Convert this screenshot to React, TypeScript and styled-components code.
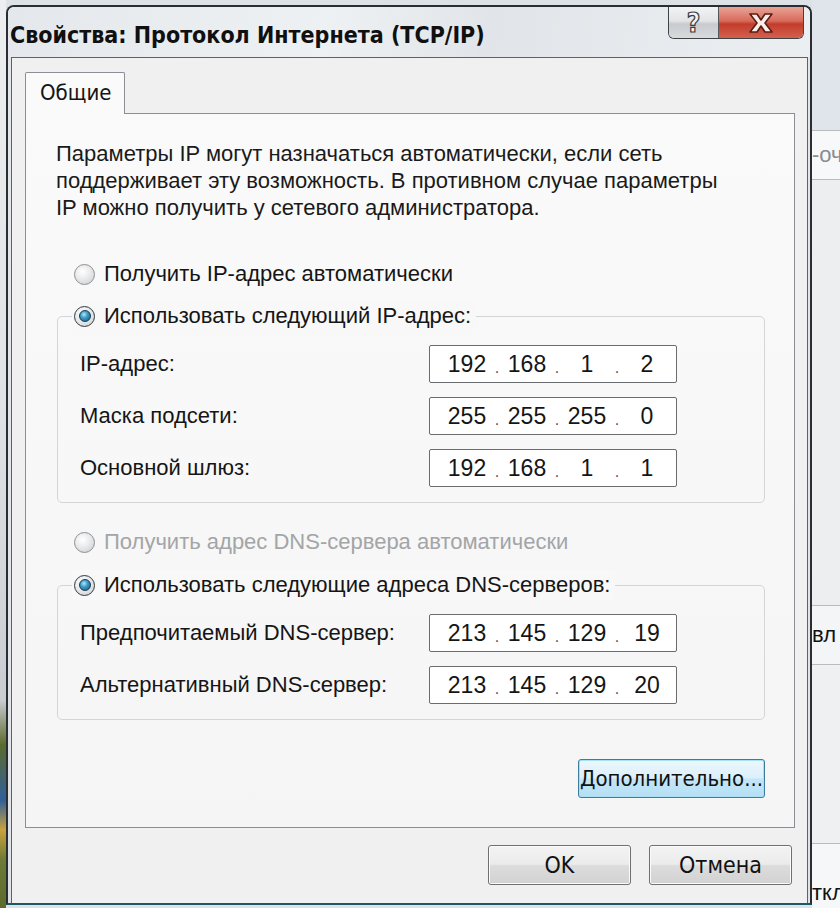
import React from 'react'
import styled, { createGlobalStyle } from 'styled-components'

const GlobalStyle = createGlobalStyle`
  html, body {
    margin: 0;
    padding: 0;
    background: #dde2e7;
  }
  body {
    font-family: "Liberation Sans", Arial, sans-serif;
    color: #151515;
  }
  * { box-sizing: border-box; }
`

const narrow = `"Liberation Sans Narrow", "DejaVu Sans Condensed", "Liberation Sans", sans-serif`

interface IpFieldProps {
  label: string;
  value: string[];
}

const IpRow: React.FC<IpFieldProps> = ({ label, value }) => (
  <>
    <FieldLabel>{label}</FieldLabel>
    <IpBox>
      {value.map((part, i) => (
        <React.Fragment key={i}>
          {i > 0 && <IpDot>.</IpDot>}
          <IpPart>{part}</IpPart>
        </React.Fragment>
      ))}
    </IpBox>
  </>
)

interface RadioProps {
  label: string;
  checked?: boolean;
  disabled?: boolean;
}

const Radio: React.FC<RadioProps> = ({ label, checked, disabled }) => (
  <>
    <RadioCircle $checked={checked}>{checked && <RadioDot />}</RadioCircle>
    <RadioText $disabled={disabled}>{label}</RadioText>
  </>
)

const CloseGlyph = () => (
  <svg width="30" height="22" viewBox="0 0 30 22">
    <path
      d="M4 2 H11 L15 8 L19 2 H26 L19 11 L26 20 H19 L15 14 L11 20 H4 L11 11 Z"
      fill="#fbeeea"
      stroke="#5a1d14"
      strokeWidth="1.6"
      strokeLinejoin="round"
    />
  </svg>
)

export default function App() {
  return (
    <Page>
      <GlobalStyle />
      <LeftStrip />
      <Window>
        <TitleBar>
          <Title>Свойства: Протокол Интернета (TCP/IP)</Title>
          <CaptionButtons>
            <HelpButton>?</HelpButton>
            <CloseButton><CloseGlyph /></CloseButton>
          </CaptionButtons>
        </TitleBar>
        <Client>
          <TabStrip>
            <Tab>Общие</Tab>
          </TabStrip>
          <Panel>
            <Description>
              Параметры IP могут назначаться автоматически, если сеть<br />
              поддерживает эту возможность. В противном случае параметры<br />
              IP можно получить у сетевого администратора.
            </Description>

            <RadioRow $top={38}>
              <Radio label="Получить IP-адрес автоматически" />
            </RadioRow>

            <GroupBox $top={27}>
              <GroupLegend>
                <Radio label="Использовать следующий IP-адрес:" checked />
              </GroupLegend>
              <FieldGrid>
                <IpRow label="IP-адрес:" value={['192', '168', '1', '2']} />
                <IpRow label="Маска подсети:" value={['255', '255', '255', '0']} />
                <IpRow label="Основной шлюз:" value={['192', '168', '1', '1']} />
              </FieldGrid>
            </GroupBox>

            <RadioRow $top={24}>
              <Radio label="Получить адрес DNS-сервера автоматически" disabled />
            </RadioRow>

            <GroupBox $top={28}>
              <GroupLegend>
                <Radio label="Использовать следующие адреса DNS-серверов:" checked />
              </GroupLegend>
              <FieldGrid>
                <IpRow label="Предпочитаемый DNS-сервер:" value={['213', '145', '129', '19']} />
                <IpRow label="Альтернативный DNS-сервер:" value={['213', '145', '129', '20']} />
              </FieldGrid>
            </GroupBox>

            <AdvancedButton>Дополнительно...</AdvancedButton>
          </Panel>
          <ButtonRow>
            <DialogButton>OK</DialogButton>
            <DialogButton>Отмена</DialogButton>
          </ButtonRow>
        </Client>
      </Window>
      <RightStrip>
        <BackBlock $h={130} $bg="#dfe5eb" />
        <BackBlock $h={50} $bg="#f7f8f9" $lined>
          <BackText $color="#8a8d90">-очи</BackText>
        </BackBlock>
        <BackBlock $h={425} $bg="#eceef0" />
        <BackBlock $h={60} $bg="#f4f5f6" $lined>
          <BackText $color="#111">вл</BackText>
        </BackBlock>
        <BackBlock $h={178} $bg="#eef0f2" />
        <BackBlock $h={65} $bg="#f6f7f8" $lined $end>
          <BackText $color="#111">ткл</BackText>
        </BackBlock>
      </RightStrip>
    </Page>
  )
}

const Page = styled.div`
  display: flex;
  width: 840px;
  height: 908px;
  overflow: hidden;
`

const LeftStrip = styled.div`
  width: 6px;
  flex-shrink: 0;
  background: linear-gradient(
    to bottom,
    #eceeef 0,
    #dfe2e5 420px,
    #c9cdd1 700px,
    #5c6a2d 745px,
    #2f5f99 800px,
    #c9a23d 830px,
    #6d7b37 860px,
    #5c6a2d 100%
  );
`

const Window = styled.div`
  width: 806px;
  height: 900px;
  margin-top: 5px;
  flex-shrink: 0;
  display: flex;
  flex-direction: column;
  border: 2px solid #2a2e33;
  border-bottom-color: #1d5866;
  border-radius: 8px 8px 0 0;
  background: linear-gradient(to bottom, #eef1f4 0, #e2e6ea 50px, #dfe3e7 100%);
`

const TitleBar = styled.div`
  height: 50px;
  display: flex;
  align-items: flex-start;
  padding-left: 2px;
  padding-right: 6px;
  background: linear-gradient(100deg, #e4e8ec 0%, #eef1f3 40%, #e1e5e9 60%, #eceff2 100%);
  border-radius: 6px 6px 0 0;
`

const Title = styled.div`
  flex: 1;
  padding-top: 14px;
  font-family: ${narrow};
  font-stretch: condensed;
  font-weight: bold;
  font-size: 23px;
  line-height: 28px;
  color: #101010;
  white-space: nowrap;
`

const CaptionButtons = styled.div`
  display: flex;
  height: 32px;
  margin-top: 0;
  border: 1px solid #3f4347;
  border-top: none;
  border-radius: 0 0 6px 6px;
  overflow: hidden;
`

const HelpButton = styled.div`
  width: 50px;
  display: flex;
  align-items: center;
  justify-content: center;
  background: linear-gradient(to bottom, #f2f3f4 0, #e2e4e6 45%, #c8cbce 55%, #d8dadc 100%);
  border-right: 1px solid #55595d;
  font-family: ${narrow};
  font-weight: bold;
  font-size: 26px;
  color: #f4f4f4;
  -webkit-text-stroke: 1.2px #3a3c3e;
`

const CloseButton = styled.div`
  width: 84px;
  display: flex;
  align-items: center;
  justify-content: center;
  background: linear-gradient(to bottom, #e8a497 0, #d86a5a 45%, #c23c2b 55%, #d4604d 100%);
`

const Client = styled.div`
  flex: 1;
  display: flex;
  flex-direction: column;
  margin: 0 2px 0 3px;
  padding: 14px 12px 0 13px;
  background: #f0f0f0;
  border: 1px solid #5d6267;
  border-bottom: none;
`

const TabStrip = styled.div`
  display: flex;
  height: 41px;
`

const Tab = styled.div`
  width: 100px;
  height: 42px;
  padding: 6px 0 0 14px;
  position: relative;
  z-index: 1;
  background: #fafafa;
  border: 1px solid #8b8e94;
  border-bottom: none;
  border-radius: 2px 2px 0 0;
  font-family: ${narrow};
  font-stretch: condensed;
  font-size: 22px;
  line-height: 28px;
  color: #151515;
`

const Panel = styled.div`
  display: flex;
  flex-direction: column;
  padding: 26px 29px 29px 29px;
  background: linear-gradient(to bottom, #fafafa 0, #f5f5f5 100%);
  border: 1px solid #8b8e94;
`

const Description = styled.div`
  font-size: 22px;
  line-height: 27px;
  color: #1a1a1a;
  margin-left: 1px;
  white-space: nowrap;
`

const RadioRow = styled.div<{ $top: number }>`
  display: flex;
  align-items: center;
  gap: 9px;
  height: 30px;
  margin: ${p => p.$top}px 0 0 19px;
`

const RadioCircle = styled.div<{ $checked?: boolean }>`
  width: 21px;
  height: 21px;
  flex-shrink: 0;
  border-radius: 50%;
  border: 1px solid ${p => (p.$checked ? '#2e3a40' : '#8c8f92')};
  background: radial-gradient(circle at 40% 35%, #ffffff 0, #e9eaeb 45%, #c9cbcd 100%);
  display: flex;
  align-items: center;
  justify-content: center;
`

const RadioDot = styled.div`
  width: 12px;
  height: 12px;
  border-radius: 50%;
  border: 1px solid #173b52;
  background: radial-gradient(circle at 40% 35%, #b6e6f7 0, #3c9bc8 40%, #17567e 100%);
`

const RadioText = styled.span<{ $disabled?: boolean }>`
  font-size: 22px;
  line-height: 30px;
  white-space: nowrap;
  color: ${p => (p.$disabled ? '#a3a5a7' : '#151515')};
`

const GroupBox = styled.div<{ $top: number }>`
  display: flex;
  flex-direction: column;
  margin: ${p => p.$top}px 0 0 2px;
  padding: 0 22px 15px 22px;
  border: 1px solid #d2d6d9;
  border-radius: 5px;
`

const GroupLegend = styled.div`
  align-self: flex-start;
  display: flex;
  align-items: center;
  gap: 9px;
  height: 30px;
  margin: -16px 0 0 -8px;
  padding: 0 5px 0 2px;
  background: #f8f8f8;
`

const FieldGrid = styled.div`
  display: grid;
  grid-template-columns: 349px 248px;
  row-gap: 14px;
  margin-top: 14px;
  align-items: center;
`

const FieldLabel = styled.div`
  font-size: 22px;
  line-height: 30px;
  color: #151515;
  white-space: nowrap;
`

const IpBox = styled.div`
  height: 38px;
  display: flex;
  align-items: center;
  padding-left: 13px;
  background: #ffffff;
  border: 1px solid #6a6d70;
  border-radius: 2px;
`

const IpPart = styled.span`
  width: 48px;
  text-align: center;
  font-size: 23px;
  color: #151515;
`

const IpDot = styled.span`
  width: 12px;
  text-align: center;
  font-size: 16px;
  padding-top: 8px;
  color: #555;
`

const AdvancedButton = styled.div`
  align-self: flex-end;
  width: 187px;
  height: 39px;
  margin-top: 39px;
  display: flex;
  align-items: center;
  justify-content: center;
  border: 1px solid #3b7c9f;
  border-radius: 3px;
  box-shadow: inset 0 0 0 1px #a6e1f5;
  background: linear-gradient(to bottom, #ecf7fd 0, #dcf0fb 48%, #c2e6f8 52%, #b6dff4 100%);
  font-family: ${narrow};
  font-stretch: condensed;
  font-size: 22px;
  color: #111;
`

const ButtonRow = styled.div`
  display: flex;
  justify-content: flex-end;
  gap: 18px;
  margin: 17px 3px 0 0;
`

const DialogButton = styled.div`
  width: 143px;
  height: 40px;
  display: flex;
  align-items: center;
  justify-content: center;
  border: 1px solid #707070;
  border-radius: 3px;
  box-shadow: inset 0 0 0 1px #fbfbfb;
  background: linear-gradient(to bottom, #f3f3f3 0, #ebebeb 48%, #dcdcdc 52%, #d2d2d2 100%);
  font-family: ${narrow};
  font-stretch: condensed;
  font-size: 23px;
  color: #111;
`

const RightStrip = styled.div`
  flex: 1;
  display: flex;
  flex-direction: column;
  overflow: hidden;
  background: #eceef0;
`

const BackBlock = styled.div<{ $h: number; $bg: string; $lined?: boolean; $end?: boolean }>`
  height: ${p => p.$h}px;
  flex-shrink: 0;
  display: flex;
  align-items: ${p => (p.$end ? 'flex-end' : 'center')};
  background: ${p => p.$bg};
  border-top: ${p => (p.$lined ? '1px solid #b9bcbf' : 'none')};
  border-bottom: ${p => (p.$lined && !p.$end ? '1px solid #b9bcbf' : 'none')};
  overflow: hidden;
`

const BackText = styled.span<{ $color: string }>`
  font-size: 22px;
  line-height: 30px;
  color: ${p => p.$color};
  white-space: nowrap;
`
